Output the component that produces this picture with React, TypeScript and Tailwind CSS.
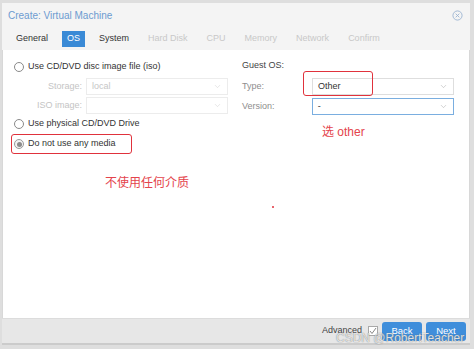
import { ChevronDown } from 'lucide-react'

const tabs = [
  { name: 'General', state: 'on' },
  { name: 'OS', state: 'active' },
  { name: 'System', state: 'on' },
  { name: 'Hard Disk', state: 'off' },
  { name: 'CPU', state: 'off' },
  { name: 'Memory', state: 'off' },
  { name: 'Network', state: 'off' },
  { name: 'Confirm', state: 'off' },
]

const Radio = ({ checked = false }: { checked?: boolean }) => (
  <span
    className={`flex h-[10px] w-[10px] shrink-0 items-center justify-center rounded-full border ${
      checked ? 'border-[#9a9a9a] bg-[#f2f2f2]' : 'border-[#8a8a8a] bg-white'
    }`}
  >
    {checked && <span className="h-[5px] w-[5px] rounded-full bg-[#8c8c8c]"></span>}
  </span>
)

type SelectProps = {
  value: string
  width: string
  disabled?: boolean
  focused?: boolean
}

const Select = ({ value, width, disabled, focused }: SelectProps) => (
  <div
    className={`flex h-[17px] items-center justify-between border bg-white pl-[5px] pr-[5px] ${width} ${
      focused ? 'border-[#7aaee0]' : disabled ? 'border-[#ececec]' : 'border-[#dedede]'
    }`}
  >
    <span className={disabled ? 'text-[#c6c6c6]' : 'text-[#333]'}>{value}</span>
    <ChevronDown size={9} strokeWidth={1.5} className={disabled ? 'text-[#d4d4d4]' : 'text-[#b0b0b0]'} />
  </div>
)

export default function App() {
  return (
    <div
      className="relative h-[349px] w-[474px] overflow-hidden bg-[#dedede] pt-[3px] pl-[2px] text-[9px] text-[#333]"
      style={{ fontFamily: '"Liberation Sans", Arial, "Noto Sans CJK SC", sans-serif' }}
    >
      <div className="flex w-[468px] flex-col bg-[#f4f4f4]">
        {/* Header */}
        <div className="flex h-[24px] items-center justify-between pl-[6px] pr-[7px]">
          <span className="text-[10px] text-[#6d9bd0]">Create: Virtual Machine</span>
          <svg width="11" height="11" viewBox="0 0 12 12" className="text-[#9bb5d2]">
            <circle cx="6" cy="6" r="5" fill="none" stroke="currentColor" strokeWidth="1" />
            <path d="M4 4 L8 8 M8 4 L4 8" stroke="currentColor" strokeWidth="1" />
          </svg>
        </div>

        {/* Tabs */}
        <div className="mt-[4px] mb-[3px] flex h-[16px] items-center gap-[9px] pl-[9px]">
          {tabs.map((tab) => (
            <div
              key={tab.name}
              className={`flex h-[16px] items-center px-[5px] ${
                tab.state === 'active'
                  ? 'bg-[#3a8ad6] text-white'
                  : tab.state === 'on'
                  ? 'text-[#333]'
                  : 'text-[#c8c8c8]'
              }`}
            >
              {tab.name}
            </div>
          ))}
        </div>

        {/* Content */}
        <div className="flex h-[268px] border-x border-[#d8d8d8] bg-white pt-[9px] pl-[11px]">
          {/* Left column */}
          <div className="flex w-[214px] flex-col">
            <div className="mt-[1px] flex h-[14px] items-center gap-[4px]">
              <Radio />
              <span>Use CD/DVD disc image file (iso)</span>
            </div>
            <div className="mt-[4px] flex items-center">
              <span className="w-[68px] text-right text-[#c4c4c4]">Storage:</span>
              <div className="ml-[4px]">
                <Select value="local" width="w-[142px]" disabled />
              </div>
            </div>
            <div className="mt-[2px] flex items-center">
              <span className="w-[68px] text-right text-[#c4c4c4]">ISO image:</span>
              <div className="ml-[4px]">
                <Select value="" width="w-[142px]" disabled />
              </div>
            </div>
            <div className="mt-[3px] flex h-[14px] items-center gap-[4px]">
              <Radio />
              <span>Use physical CD/DVD Drive</span>
            </div>
            <div className="relative mt-[6px] flex h-[14px] items-center gap-[4px]">
              <Radio checked />
              <span>Do not use any media</span>
              <div className="absolute -left-[3px] -top-[3px] h-[20px] w-[121px] rounded-[3px] border-[1.5px] border-[#e0323c]"></div>
            </div>
            <div className="mt-[24px] ml-[91px] text-[12px] leading-[16px] text-[#e4444c]">不使用任何介质</div>
          </div>

          {/* Right column */}
          <div className="ml-[14px] flex w-[212px] flex-col">
            <div className="flex h-[14px] items-center text-[#444]">Guest OS:</div>
            <div className="relative mt-[5px] flex items-center">
              <span className="w-[70px] text-[#8e8e8e]">Type:</span>
              <Select value="Other" width="w-[142px]" />
              <div className="absolute left-[61px] -top-[7px] h-[25px] w-[70px] rounded-[3px] border-[1.5px] border-[#e0323c]"></div>
            </div>
            <div className="mt-[3px] flex items-center">
              <span className="w-[70px] text-[#8e8e8e]">Version:</span>
              <Select value="-" width="w-[143px]" focused />
            </div>
            <div className="mt-[9px] ml-[80px] text-[12px] leading-[16px] text-[#e4444c]">选 other</div>
          </div>
        </div>

        {/* Footer */}
        <div className="flex h-[25px] items-center justify-end gap-[4px] border-t border-[#dcdcdc] bg-[#e7e7e7] pr-[4px]">
          <span className="mr-[2px] text-[#444]">Advanced</span>
          <span className="flex h-[10px] w-[10px] items-center justify-center border border-[#a8a8a8] bg-white">
            <svg width="8" height="8" viewBox="0 0 8 8">
              <path d="M1 4 L3 6.5 L7 1" fill="none" stroke="#888" strokeWidth="1" />
            </svg>
          </span>
          <button className="flex h-[19px] w-[40px] items-center justify-center rounded-[3px] bg-[#3f8edb] text-[9.5px] text-white">
            Back
          </button>
          <button className="flex h-[19px] w-[40px] items-center justify-center rounded-[3px] bg-[#3f8edb] text-[9.5px] text-white">
            Next
          </button>
        </div>
        <div className="h-[2px] bg-[#cbcbcb]"></div>
      </div>

      {/* Watermark */}
      <div className="absolute left-[336px] top-[330px] text-[12px] leading-[16px] text-white/80 [text-shadow:0_0_1px_#555]">
        CSDN @RobertTeacher
      </div>

      {/* Stray red dot */}
      <div className="absolute left-[272px] top-[206px] h-[2px] w-[2px] rounded-full bg-[#e0323c]"></div>
    </div>
  )
}
